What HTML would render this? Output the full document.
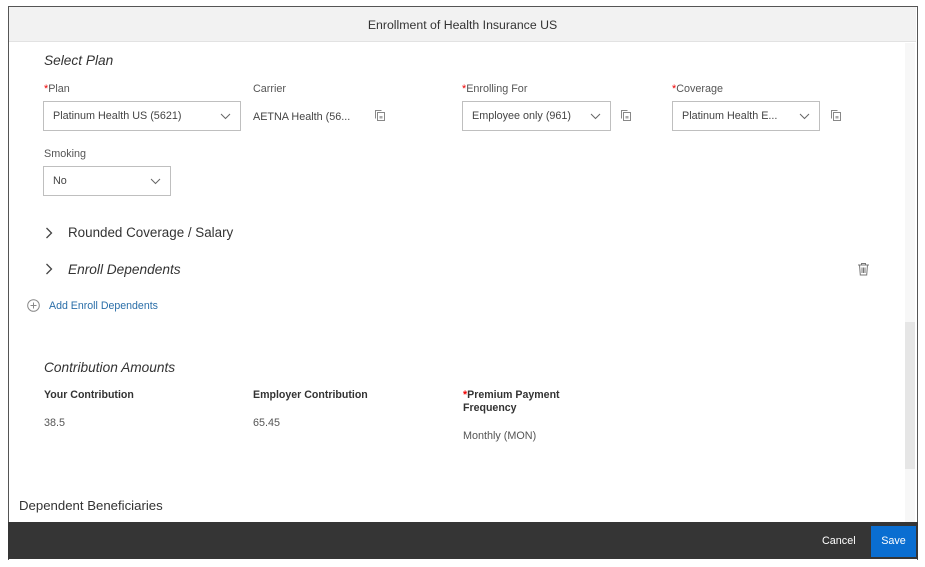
<!DOCTYPE html>
<html><head><style>
*{margin:0;padding:0;box-sizing:border-box}
body{width:925px;height:567px;background:#fff;position:relative;overflow:hidden;font-family:"Liberation Sans",sans-serif;color:#333}
.a{position:absolute;white-space:nowrap}
.frame{position:absolute;left:8px;top:6px;width:910px;height:554px;border:1.5px solid #555;border-bottom:none}
.hdr{position:absolute;left:9px;top:7px;width:907px;height:35px;background:#f2f2f2;border-bottom:1px solid #e2e2e2;text-align:center;font-size:12.3px;line-height:36px;color:#333}
.lbl{font-size:10.8px;color:#555}
.req{color:#e00}
.sel{position:absolute;height:30px;border:1px solid #bfbfbf;background:#fff;font-size:10.8px;color:#444;line-height:29px;padding-left:9px}
.sel svg{position:absolute;right:9px;top:11px}
.h{font-size:13.7px;font-style:italic;color:#333}
.b{font-size:10.6px;font-weight:bold;color:#333}
.v{font-size:10.8px;color:#555}
.foot{position:absolute;left:8px;top:522px;width:910px;height:37px;background:#353535}
</style></head><body>
<div class="frame"></div>
<div class="hdr">Enrollment of Health Insurance US</div>
<div class="a" style="left:905px;top:43px;width:10px;height:479px;background:#f7f7f7"></div>
<div class="a" style="left:905px;top:322px;width:10px;height:147px;background:#e6e6e6"></div>

<div class="a h" style="left:44px;top:53px">Select Plan</div>
<div class="a lbl" style="left:44px;top:83px"><span class="req">*</span>Plan</div>
<div class="a lbl" style="left:253px;top:83px">Carrier</div>
<div class="a lbl" style="left:462px;top:83px"><span class="req">*</span>Enrolling For</div>
<div class="a lbl" style="left:672px;top:83px"><span class="req">*</span>Coverage</div>

<div class="sel" style="left:43px;top:101px;width:198px">Platinum Health US (5621)<svg width="11" height="7" viewBox="0 0 11 7"><path d="M1 1l4.5 4.5L10 1" fill="none" stroke="#666" stroke-width="1"/></svg></div>
<div class="a v" style="left:253px;top:111px;color:#444">AETNA Health (56...</div>
<div class="sel" style="left:462px;top:101px;width:149px">Employee only (961)<svg width="11" height="7" viewBox="0 0 11 7"><path d="M1 1l4.5 4.5L10 1" fill="none" stroke="#666" stroke-width="1"/></svg></div>
<div class="sel" style="left:672px;top:101px;width:148px">Platinum Health E...<svg width="11" height="7" viewBox="0 0 11 7"><path d="M1 1l4.5 4.5L10 1" fill="none" stroke="#666" stroke-width="1"/></svg></div>

<svg class="a" style="left:374px;top:109px" width="12" height="13" viewBox="0 0 12 13"><path d="M1.5 9.5V1.5h6" fill="none" stroke="#888"/><rect x="3.5" y="3.5" width="7" height="8" fill="none" stroke="#888"/><rect x="5.5" y="7" width="3" height="2.5" fill="#aaa"/></svg>
<svg class="a" style="left:620px;top:109px" width="12" height="13" viewBox="0 0 12 13"><path d="M1.5 9.5V1.5h6" fill="none" stroke="#888"/><rect x="3.5" y="3.5" width="7" height="8" fill="none" stroke="#888"/><rect x="5.5" y="7" width="3" height="2.5" fill="#aaa"/></svg>
<svg class="a" style="left:830px;top:109px" width="12" height="13" viewBox="0 0 12 13"><path d="M1.5 9.5V1.5h6" fill="none" stroke="#888"/><rect x="3.5" y="3.5" width="7" height="8" fill="none" stroke="#888"/><rect x="5.5" y="7" width="3" height="2.5" fill="#aaa"/></svg>

<div class="a lbl" style="left:44px;top:148px">Smoking</div>
<div class="sel" style="left:43px;top:166px;width:128px">No<svg width="11" height="7" viewBox="0 0 11 7"><path d="M1 1l4.5 4.5L10 1" fill="none" stroke="#666" stroke-width="1"/></svg></div>

<svg class="a" style="left:45px;top:227px" width="8" height="12" viewBox="0 0 8 12"><path d="M1.5 1l5 5-5 5" fill="none" stroke="#444" stroke-width="1.3"/></svg>
<div class="a" style="left:68px;top:225px;font-size:13.4px;color:#333">Rounded Coverage / Salary</div>
<svg class="a" style="left:45px;top:263px" width="8" height="12" viewBox="0 0 8 12"><path d="M1.5 1l5 5-5 5" fill="none" stroke="#444" stroke-width="1.3"/></svg>
<div class="a h" style="left:68px;top:262px">Enroll Dependents</div>
<svg class="a" style="left:857px;top:262px" width="13" height="14" viewBox="0 0 13 14"><path d="M1 3h11M4.5 3V1.5h4V3M2.5 3l.8 10h6.4l.8-10M5 5.5v5.5M6.5 5.5v5.5M8 5.5v5.5" fill="none" stroke="#777" stroke-width="1"/></svg>

<svg class="a" style="left:27px;top:299px" width="13" height="13" viewBox="0 0 13 13"><circle cx="6.5" cy="6.5" r="5.8" fill="none" stroke="#888"/><path d="M6.5 3.5v6M3.5 6.5h6" stroke="#888"/></svg>
<div class="a" style="left:49px;top:300px;font-size:10.6px;color:#2a6ea8">Add Enroll Dependents</div>

<div class="a h" style="left:44px;top:360px">Contribution Amounts</div>
<div class="a b" style="left:44px;top:389px">Your Contribution</div>
<div class="a b" style="left:253px;top:389px">Employer Contribution</div>
<div class="a b" style="left:463px;top:389px;line-height:13px"><span class="req">*</span>Premium Payment<br>Frequency</div>
<div class="a v" style="left:44px;top:417px">38.5</div>
<div class="a v" style="left:253px;top:417px">65.45</div>
<div class="a v" style="left:463px;top:430px">Monthly (MON)</div>

<div class="a" style="left:19px;top:498px;font-size:13.2px;color:#333">Dependent Beneficiaries</div>

<div class="foot"></div>
<div class="a" style="left:822px;top:535px;font-size:10.8px;color:#fff">Cancel</div>
<div class="a" style="left:871px;top:526px;width:45px;height:31px;background:#0a6ed1;color:#fff;font-size:10.8px;text-align:center;line-height:31px">Save</div>
</body></html>
